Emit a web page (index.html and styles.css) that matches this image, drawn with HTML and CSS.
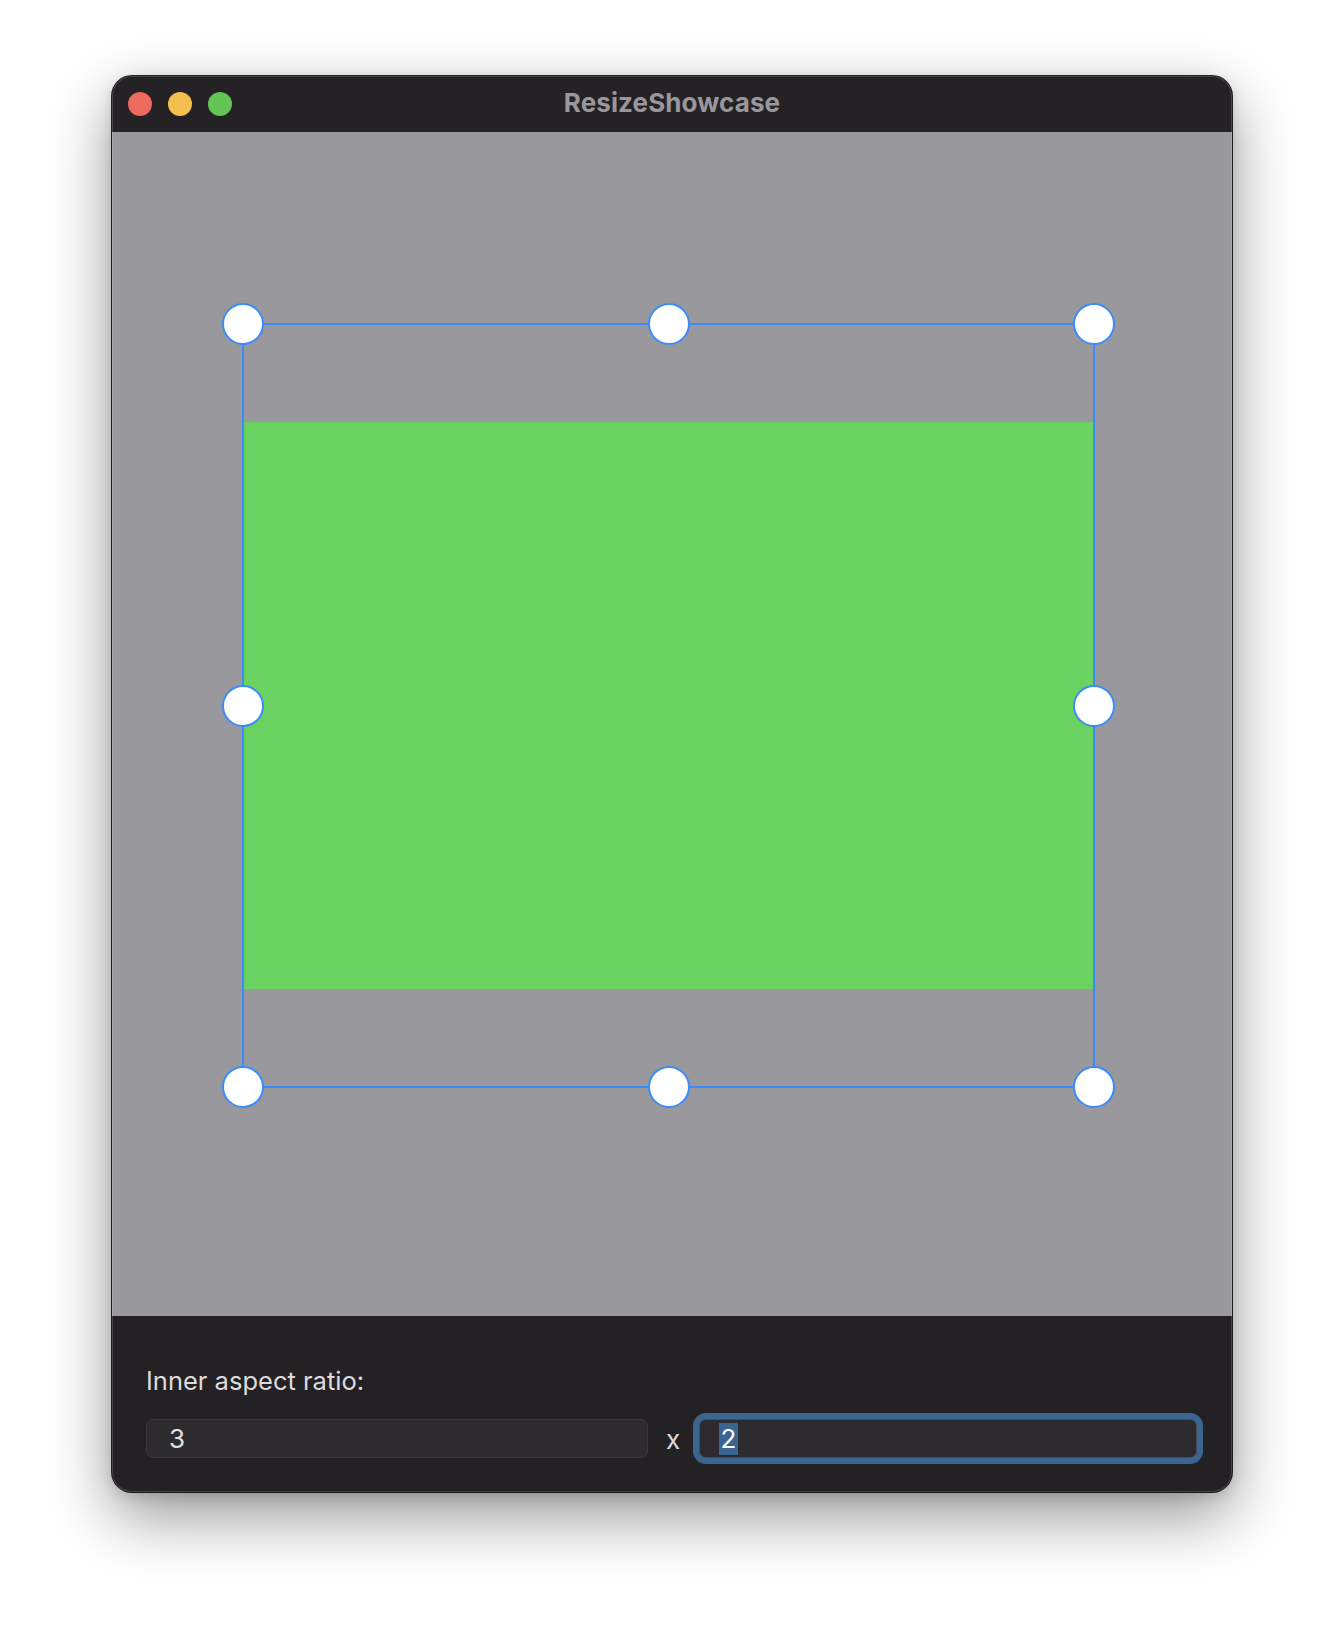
FILE: index.html
```html
<!DOCTYPE html>
<html>
<head>
<meta charset="utf-8">
<link rel="stylesheet" href="styles.css">
</head>
<body>
<div class="window">
  <div class="titlebar">
    <div class="lights">
      <span class="light red"></span>
      <span class="light yellow"></span>
      <span class="light green"></span>
    </div>
    <div class="title">ResizeShowcase</div>
    <div class="spacer"></div>
  </div>
  <div class="content">
    <div class="frame">
      <div class="inner"></div>
      <span class="handle h-tl"></span>
      <span class="handle h-tm"></span>
      <span class="handle h-tr"></span>
      <span class="handle h-ml"></span>
      <span class="handle h-mr"></span>
      <span class="handle h-bl"></span>
      <span class="handle h-bm"></span>
      <span class="handle h-br"></span>
    </div>
  </div>
  <div class="panel">
    <div class="label">Inner aspect ratio:</div>
    <div class="row">
      <div class="field">3</div>
      <span class="times">x</span>
      <div class="field focused"><span class="sel">2</span></div>
    </div>
  </div>
</div>
</body>
</html>
```
FILE: styles.css
```css
html, body {
  margin: 0;
  padding: 0;
  background: #ffffff;
}
body {
  width: 1344px;
  height: 1640px;
  overflow: hidden;
  font-family: Inter, "Liberation Sans", sans-serif;
}
.window {
  margin: 76px 0 0 112px;
  width: 1120px;
  height: 1416px;
  border-radius: 20px;
  overflow: hidden;
  background: #242124;
  box-shadow: 0 0 0 1px rgba(0,0,0,0.85), 0 24px 64px rgba(0,0,0,0.42), 0 4px 14px rgba(0,0,0,0.15);
  display: flex;
  flex-direction: column;
  position: relative;
}
.window::after {
  content: "";
  position: absolute;
  inset: 0;
  border-radius: 20px;
  box-shadow: inset 0 0 0 1px rgba(255,255,255,0.16);
  pointer-events: none;
}
.titlebar {
  height: 56px;
  flex: none;
  background: #252226;
  display: grid;
  grid-template-columns: 1fr auto 1fr;
  align-items: center;
  box-sizing: border-box;
  padding-bottom: 3px;
}
.lights {
  display: flex;
  gap: 16px;
  padding-left: 16px;
  padding-top: 3px;
}
.light {
  width: 24px;
  height: 24px;
  border-radius: 50%;
}
.red { background: #ec6a5e; }
.yellow { background: #f4bf4f; }
.green { background: #61c454; }
.title {
  color: #99979c;
  font-weight: 700;
  font-size: 26px;
  letter-spacing: 0.1px;
  padding-left: 0;
}
.content {
  height: 1184px;
  flex: none;
  background: #99989d;
  padding: 191px 0 0 130px;
  box-sizing: border-box;
}
.frame {
  position: relative;
  width: 853px;
  height: 765px;
  box-sizing: border-box;
  border: 2px solid #3a8bfb;
  display: flex;
  flex-direction: column;
  justify-content: center;
}
.inner {
  height: 567px;
  background: #6ad260;
}
.handle {
  position: absolute;
  width: 42px;
  height: 42px;
  box-sizing: border-box;
  border-radius: 50%;
  background: #ffffff;
  border: 2px solid #3a8bfb;
  transform: translate(-50%, -50%);
}
.h-tl { left: -1px; top: -1px; }
.h-tm { left: 50%; top: -1px; }
.h-tr { left: calc(100% + 1px); top: -1px; }
.h-ml { left: -1px; top: 50%; }
.h-mr { left: calc(100% + 1px); top: 50%; }
.h-bl { left: -1px; top: calc(100% + 1px); }
.h-bm { left: 50%; top: calc(100% + 1px); }
.h-br { left: calc(100% + 1px); top: calc(100% + 1px); }
.panel {
  flex: 1;
  background: #242124;
  padding: 49px 35px 0 34px;
}
.label {
  color: #dddbde;
  font-size: 25.5px;
  line-height: 32px;
  margin-bottom: 21px;
}
.row {
  display: flex;
  align-items: center;
}
.field {
  flex: 1;
  height: 39px;
  box-sizing: border-box;
  background: #2e2b2f;
  border: 1px solid #3b383c;
  border-radius: 7px;
  color: #e2e0e3;
  font-size: 26px;
  line-height: 37px;
  padding-left: 22px;
}
.field.focused {
  border-color: #4a4a50;
  box-shadow: 0 0 0 6px #3a6691;
  padding-left: 19px;
}
.times {
  width: 51px;
  text-align: center;
  color: #dddbde;
  font-size: 26px;
  line-height: 39px;
  flex: none;
  padding-top: 2px;
}
.sel {
  background: #3b6591;
  color: #ffffff;
  display: inline-block;
  line-height: 32px;
  padding: 0 2px;
}
```
